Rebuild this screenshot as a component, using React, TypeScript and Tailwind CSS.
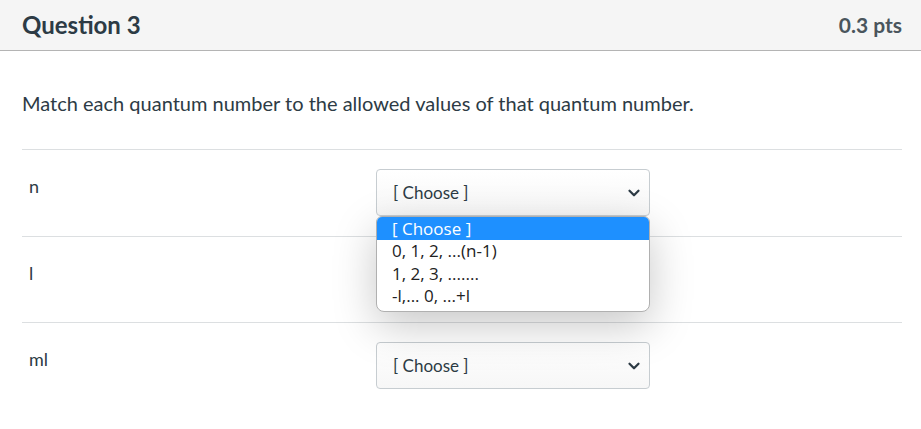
import { ChevronDown } from 'lucide-react';

type Row = { label: string; open?: boolean };

const rows: Row[] = [{ label: 'n', open: true }, { label: 'l' }, { label: 'ml' }];
const options = ['[ Choose ]', '0, 1, 2, ...(n-1)', '1, 2, 3, .......', '-l,... 0, ...+l'];

const SelectBox = ({ open }: { open?: boolean }) => (
  <div className="relative mt-[19px]">
    <div className="flex h-[47px] w-[274px] items-center justify-between rounded-[4px] border border-[#c7cdd1] bg-gradient-to-b from-white to-[#f7f7f7] pl-[16px] pr-[6px] text-[17px] text-[#2d3b45]">
      <span>[ Choose ]</span>
      <ChevronDown className="h-[18px] w-[18px] text-[#2d3b45]" strokeWidth={3} />
    </div>
    {open ? (
      <ul className="absolute left-0 top-[47px] z-10 w-[274px] overflow-hidden rounded-[8px] rounded-t-[6px] border border-[#b0b0b0] bg-white pb-[3px] font-['Open_Sans',sans-serif] text-[17px] leading-[22.5px] text-[#222] shadow-[0_14px_44px_rgba(0,0,0,0.22)]">
        {options.map((opt, i) => (
          <li
            key={opt}
            className={i === 0 ? 'h-[23px] bg-[#1e90ff] pl-[15px] leading-[23px] text-white' : 'pl-[15px]'}
          >
            {opt}
          </li>
        ))}
      </ul>
    ) : null}
  </div>
);

export default function App() {
  return (
    <div className="min-h-[429px] w-[921px] bg-white font-['Lato',sans-serif] text-[#2d3b45]">
      <div className="flex h-[51px] items-center justify-between border-b border-[#b4b4b4] bg-[#f5f5f5] pl-[22px] pr-[19px]">
        <h2 className="text-[24px] font-bold">Question 3</h2>
        <span className="text-[21px] font-bold text-[#4a555d]">0.3 pts</span>
      </div>
      <div className="pl-[22px] pr-[19px]">
        <p className="pt-[38px] text-[20px] leading-[28px]">
          Match each quantum number to the allowed values of that quantum number.
        </p>
        <div className="mt-[32px]">
          {rows.map((row) => (
            <div key={row.label} className="flex h-[86.5px] border-t border-[#dcdfe1]">
              <div className="w-[354px] shrink-0 pl-[7px] pt-[24px] text-[18px] leading-[24px]">{row.label}</div>
              <SelectBox open={row.open} />
            </div>
          ))}
        </div>
      </div>
    </div>
  );
}
